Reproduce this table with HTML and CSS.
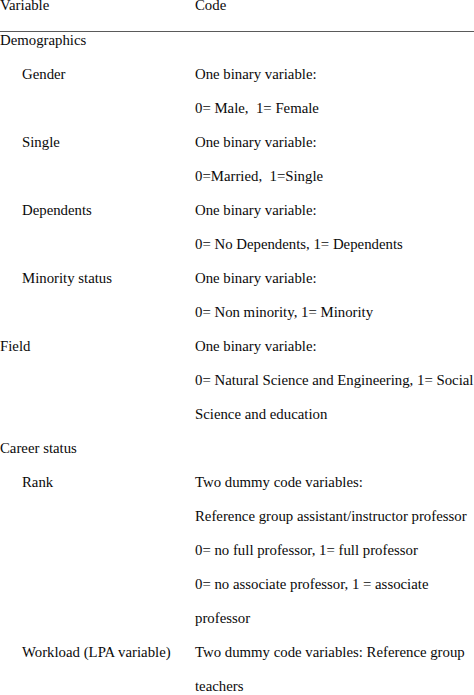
FILE: index.html
```html
<!DOCTYPE html>
<html lang="en">
<head>
<meta charset="utf-8">
<title>Variable coding</title>
<link rel="stylesheet" href="styles.css">
</head>
<body>
<div class="table">
  <div class="row head">
    <div class="var">Variable</div>
    <div class="code">Code</div>
  </div>
  <div class="row first">
    <div class="var">Demographics</div>
    <div class="code"></div>
  </div>
  <div class="row">
    <div class="var sub">Gender</div>
    <div class="code"><div>One binary variable:</div><div>0= Male,  1= Female</div></div>
  </div>
  <div class="row">
    <div class="var sub">Single</div>
    <div class="code"><div>One binary variable:</div><div>0=Married,  1=Single</div></div>
  </div>
  <div class="row">
    <div class="var sub">Dependents</div>
    <div class="code"><div>One binary variable:</div><div>0= No Dependents, 1= Dependents</div></div>
  </div>
  <div class="row">
    <div class="var sub">Minority status</div>
    <div class="code"><div>One binary variable:</div><div>0= Non minority, 1= Minority</div></div>
  </div>
  <div class="row">
    <div class="var">Field</div>
    <div class="code"><div>One binary variable:</div><div>0= Natural Science and Engineering, 1= Social</div><div>Science and education</div></div>
  </div>
  <div class="row">
    <div class="var">Career status</div>
    <div class="code"></div>
  </div>
  <div class="row">
    <div class="var sub">Rank</div>
    <div class="code"><div>Two dummy code variables:</div><div>Reference group assistant/instructor professor</div><div>0= no full professor, 1= full professor</div><div>0= no associate professor, 1 = associate</div><div>professor</div></div>
  </div>
  <div class="row">
    <div class="var sub">Workload (LPA variable)</div>
    <div class="code"><div>Two dummy code variables: Reference group</div><div>teachers</div></div>
  </div>
</div>
</body>
</html>
```

FILE: styles.css
```css
html, body {
  margin: 0;
  padding: 0;
  background: #ffffff;
}

body {
  width: 474px;
  height: 695px;
  overflow: hidden;
  font-family: "Liberation Serif", "Times New Roman", serif;
  font-size: 14.8px;
  color: #0a0a0a;
}

.table {
  display: flex;
  flex-direction: column;
  width: 474px;
}

.row {
  display: grid;
  grid-template-columns: 195px 1fr;
  line-height: 34px;
}

.row.head {
  line-height: 10px;
  height: 31px;
  border-bottom: 1px solid #5a5a5a;
}

.row.first {
  line-height: 16px;
  padding-bottom: 9px;
}

.var {
  white-space: nowrap;
}

.var.sub {
  padding-left: 22px;
}

.code {
  white-space: pre;
  overflow: visible;
}
```
